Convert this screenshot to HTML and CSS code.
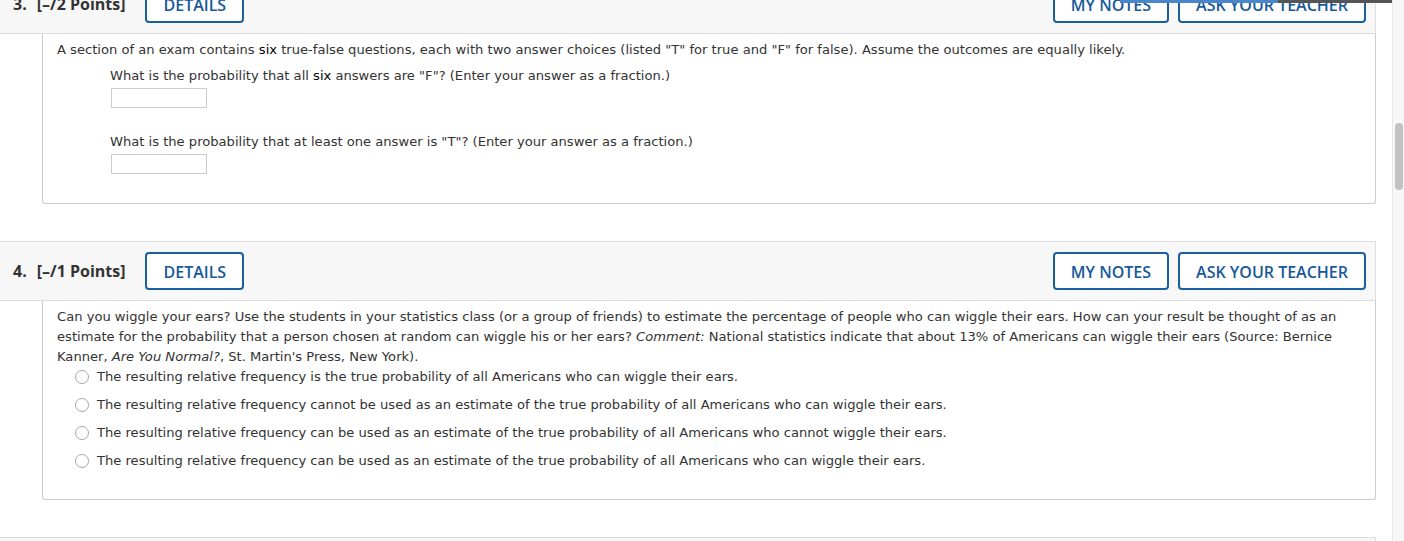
FILE: index.html
```html
<!DOCTYPE html>
<html lang="en">
<head>
<meta charset="utf-8">
<title>Assignment</title>
<link rel="stylesheet" href="styles.css">
</head>
<body>
<div class="top-progress"><span class="seg seg-blue"></span><span class="seg seg-dark"></span></div>
<div class="scrollbar"><div class="thumb"></div></div>

<main class="questions">
  <section class="question q-first">
    <header class="q-head">
      <div class="q-title"><span class="q-num">3.</span><span class="q-points">[–/2 Points]</span></div>
      <button class="btn">DETAILS</button>
      <div class="spacer"></div>
      <div class="q-actions">
        <button class="btn">MY NOTES</button>
        <button class="btn">ASK YOUR TEACHER</button>
      </div>
    </header>
    <div class="q-body q-body-3">
      <p class="lead">A section of an exam contains <span class="var">six</span> true-false questions, each with two answer choices (listed "T" for true and "F" for false). Assume the outcomes are equally likely.</p>
      <div class="sub">
        <p>What is the probability that all <span class="var">six</span> answers are "F"? (Enter your answer as a fraction.)</p>
        <input class="answer" type="text">
      </div>
      <div class="sub sub-2">
        <p>What is the probability that at least one answer is "T"? (Enter your answer as a fraction.)</p>
        <input class="answer" type="text">
      </div>
    </div>
  </section>

  <section class="question">
    <header class="q-head">
      <div class="q-title"><span class="q-num">4.</span><span class="q-points">[–/1 Points]</span></div>
      <button class="btn">DETAILS</button>
      <div class="spacer"></div>
      <div class="q-actions">
        <button class="btn">MY NOTES</button>
        <button class="btn">ASK YOUR TEACHER</button>
      </div>
    </header>
    <div class="q-body q-body-4">
      <p class="lead">Can you wiggle your ears? Use the students in your statistics class (or a group of friends) to estimate the percentage of people who can wiggle their ears. How can your result be thought of as an estimate for the probability that a person chosen at random can wiggle his or her ears? <em>Comment:</em> National statistics indicate that about 13% of Americans can wiggle their ears (Source: Bernice Kanner, <em>Are You Normal?</em>, St. Martin's Press, New York).</p>
      <ul class="options">
        <li><span class="radio"></span>The resulting relative frequency is the true probability of all Americans who can wiggle their ears.</li>
        <li><span class="radio"></span>The resulting relative frequency cannot be used as an estimate of the true probability of all Americans who can wiggle their ears.</li>
        <li><span class="radio"></span>The resulting relative frequency can be used as an estimate of the true probability of all Americans who cannot wiggle their ears.</li>
        <li><span class="radio"></span>The resulting relative frequency can be used as an estimate of the true probability of all Americans who can wiggle their ears.</li>
      </ul>
    </div>
  </section>

  <section class="question">
    <header class="q-head q-head-next"></header>
  </section>
</main>
</body>
</html>
```

FILE: styles.css
```css
* { box-sizing: border-box; }

html, body {
  margin: 0;
  padding: 0;
  background: #ffffff;
  overflow: hidden;
}

body {
  font-family: "DejaVu Sans", Verdana, sans-serif;
  font-size: 13.1px;
  color: #333333;
  width: 1404px;
  height: 541px;
  position: relative;
}

.top-progress {
  position: absolute;
  top: 0;
  left: 1120px;
  width: 272px;
  height: 3px;
  display: flex;
  z-index: 5;
}
.seg { display: block; height: 100%; }
.seg-blue { width: 158px; background: #4a86c9; }
.seg-dark { flex: 1; background: #555555; }

.scrollbar {
  position: absolute;
  top: 0;
  right: 0;
  width: 12px;
  height: 541px;
  background: #f7f7f7;
  border-left: 1px solid #e8e8e8;
}
.thumb {
  position: absolute;
  top: 123px;
  left: 2px;
  width: 8px;
  height: 67px;
  border-radius: 4px;
  background: #c2c2c2;
}

.questions {
  width: 1376px;
  margin-top: -26px;
}

.question { margin-bottom: 37px; }

.q-head {
  display: flex;
  align-items: center;
  height: 60px;
  padding: 0 9px 0 13px;
  background: #f7f7f7;
  border-top: 1px solid #dedede;
  border-right: 1px solid #dedede;
  border-bottom: 1px solid #dddddd;
}

.q-title {
  font-family: "Open Sans", "Noto Sans", sans-serif;
  font-weight: 700;
  font-size: 16px;
  color: #333333;
  margin-right: 20px;
  white-space: nowrap;
}
.q-num { margin-right: 10px; }

.spacer { flex: 1; }

.q-actions { display: flex; gap: 9px; }

.btn {
  font-family: "Open Sans", "Noto Sans", sans-serif;
  font-weight: 600;
  font-size: 16px;
  color: #17599a;
  background: #ffffff;
  border: 2px solid #1a5f9e;
  border-radius: 4px;
  height: 38px;
  padding: 3px 16px 0;
  line-height: 31px;
  cursor: pointer;
}

.q-body {
  margin-left: 42px;
  background: #ffffff;
  border: 1px solid #cccccc;
  border-top: none;
  border-radius: 0 0 3px 3px;
  padding: 6px 15px 28px 14px;
  line-height: 20px;
}
.q-body p { margin: 0; }

.var { color: #000000; }

.sub { margin: 6px 0 0 53px; }
.sub-2 { margin-top: 24px; }

.answer {
  display: block;
  margin: 2px 0 0 1px;
  width: 96px;
  height: 20px;
  border: 1px solid #cccccc;
  background: #ffffff;
  padding: 0;
}
.q-body-3 { padding-bottom: 29px; }

.options {
  list-style: none;
  margin: 0;
  padding: 0 0 0 18px;
  display: flex;
  flex-direction: column;
  gap: 8px;
}
.options li {
  display: flex;
  align-items: center;
}
.radio {
  width: 14px;
  height: 14px;
  border: 1px solid #a8a8a8;
  border-radius: 50%;
  background: #ffffff;
  margin-right: 8px;
  flex: none;
}

.q-head-next { height: 20px; }
```
